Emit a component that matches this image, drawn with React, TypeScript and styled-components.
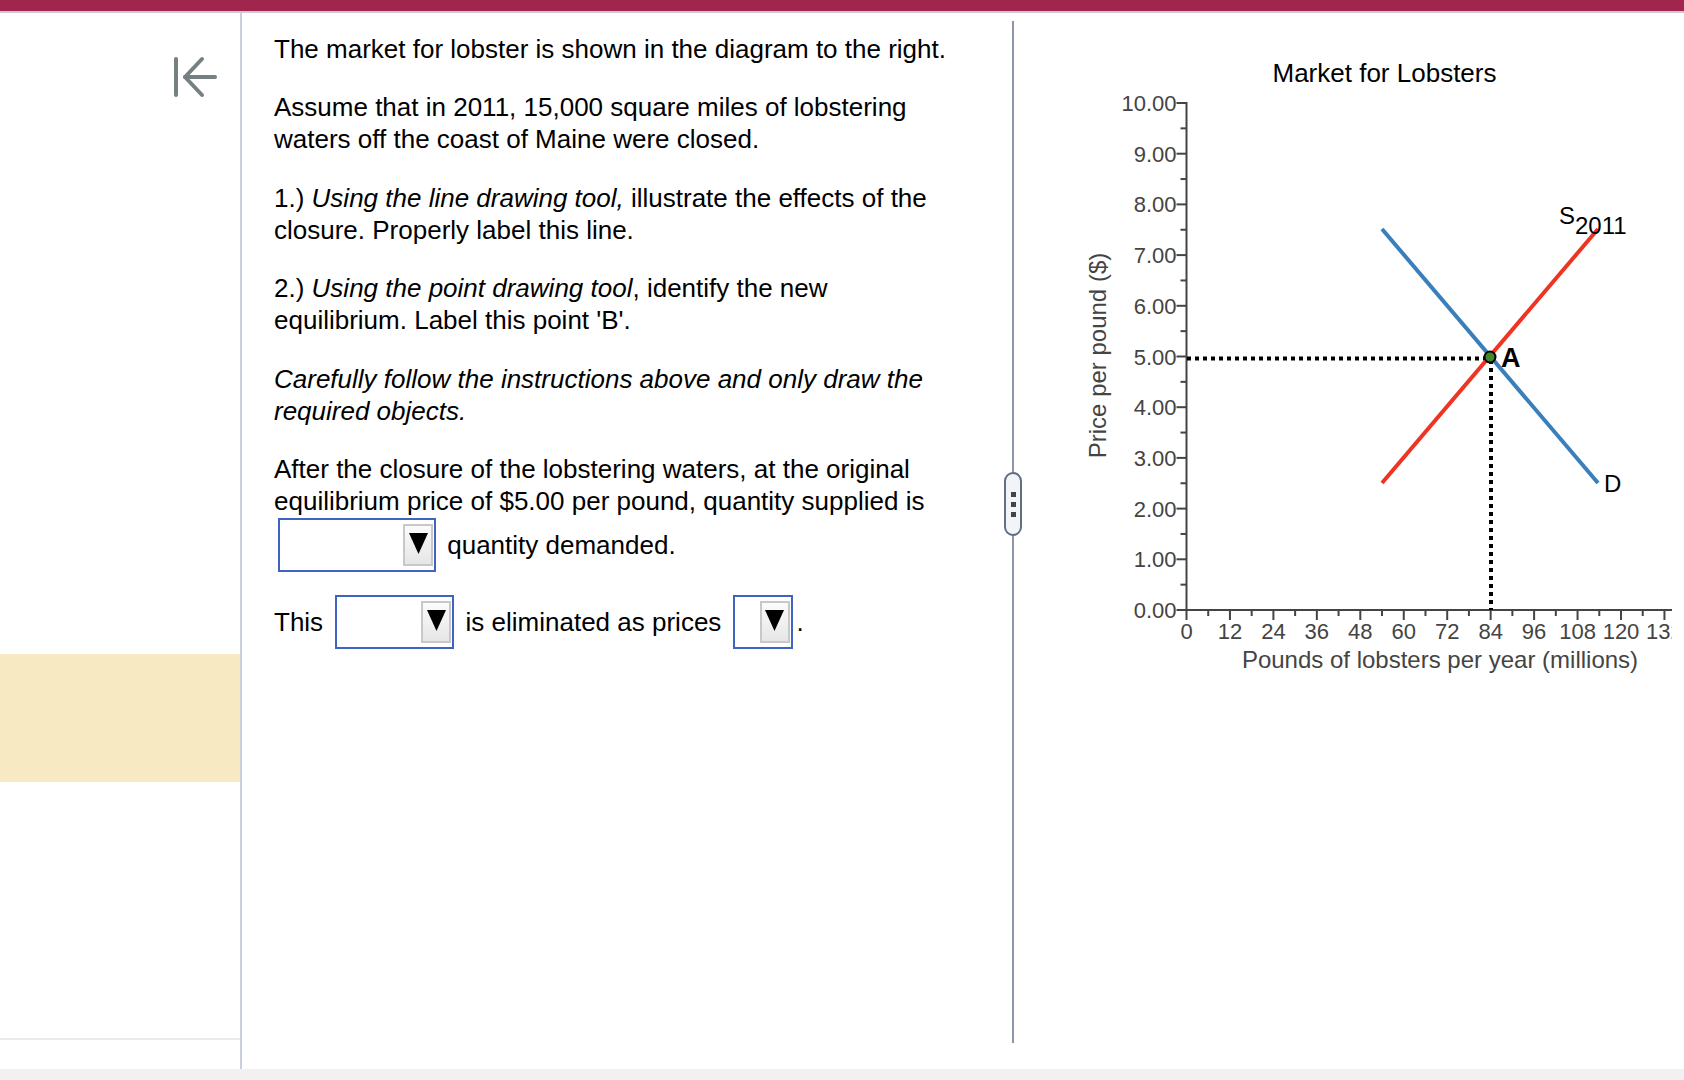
import React from "react";
import styled, { createGlobalStyle } from "styled-components";

const GlobalStyle = createGlobalStyle`
  html, body {
    margin: 0;
    padding: 0;
    background: #fff;
  }
`;

const yLabels = ["0.00", "1.00", "2.00", "3.00", "4.00", "5.00", "6.00", "7.00", "8.00", "9.00", "10.00"];
const xLabels = ["0", "12", "24", "36", "48", "60", "72", "84", "96", "108", "120", "132"];

const AXIS_X = 1186.5;
const AXIS_Y = 610;
const Y_STEP = 50.7;
const X_STEP = 43.45;

const MarketChart = () => {
  const yMinor = Array.from({ length: 10 }, (_, i) => AXIS_Y - (i + 0.5) * Y_STEP);
  const xMinor = Array.from({ length: 11 }, (_, i) => AXIS_X + (i + 0.5) * X_STEP);
  return (
    <ChartSvg viewBox="1014 13 658 660" width={658} height={660}>
      <ChartTitle x={1384.5} y={82} textAnchor="middle">
        Market for Lobsters
      </ChartTitle>

      {yLabels.map((label, i) => {
        const y = AXIS_Y - i * Y_STEP;
        return (
          <g key={label}>
            <line x1={AXIS_X - 10} x2={AXIS_X} y1={y} y2={y} stroke="#444" strokeWidth={2} />
            <AxisText x={AXIS_X - 10} y={y + 8} textAnchor="end">
              {label}
            </AxisText>
          </g>
        );
      })}
      {yMinor.map((y) => (
        <line key={y} x1={AXIS_X - 6} x2={AXIS_X} y1={y} y2={y} stroke="#444" strokeWidth={2} />
      ))}

      {xLabels.map((label, i) => {
        const x = AXIS_X + i * X_STEP;
        return (
          <g key={label}>
            <line x1={x} x2={x} y1={AXIS_Y} y2={AXIS_Y + 10} stroke="#444" strokeWidth={2} />
            <AxisText x={x} y={639} textAnchor="middle">
              {label}
            </AxisText>
          </g>
        );
      })}
      {xMinor.map((x) => (
        <line key={x} x1={x} x2={x} y1={AXIS_Y} y2={AXIS_Y + 6} stroke="#444" strokeWidth={2} />
      ))}

      <line x1={AXIS_X} x2={AXIS_X} y1={102} y2={AXIS_Y + 1} stroke="#444" strokeWidth={2} />
      <line x1={AXIS_X} x2={1672} y1={AXIS_Y} y2={AXIS_Y} stroke="#444" strokeWidth={2} />

      <AxisTitle x={1440} y={668} textAnchor="middle">
        Pounds of lobsters per year (millions)
      </AxisTitle>
      <AxisTitle transform="translate(1106 355.5) rotate(-90)" textAnchor="middle">
        Price per pound ($)
      </AxisTitle>

      <line x1={1187} x2={1487} y1={358.5} y2={358.5} stroke="#000" strokeWidth={4} strokeDasharray="4 4" />
      <line x1={1491} x2={1491} y1={360} y2={610} stroke="#000" strokeWidth={4} strokeDasharray="4 4" />

      <line x1={1382} y1={483} x2={1598} y2={229} stroke="#ee3524" strokeWidth={4} />
      <line x1={1382} y1={229} x2={1598} y2={483} stroke="#3a7fbb" strokeWidth={4} />
      <circle cx={1490} cy={357} r={5.5} fill="#3f8a2b" stroke="#000" strokeWidth={2} />

      <CurveLabel x={1559} y={224}>
        S
        <tspan dy={10}>2011</tspan>
      </CurveLabel>
      <CurveLabel x={1604} y={492}>
        D
      </CurveLabel>
      <PointLabel x={1501} y={367}>
        A
      </PointLabel>
    </ChartSvg>
  );
};

const Dropdown = ({ width, $inset }: { width: number; $inset?: boolean }) => (
  <Select $width={width} $inset={$inset}>
    <SelectButton>
      <svg width="19" height="21" viewBox="0 0 19 21">
        <path d="M0 0 H19 L9.5 21 Z" fill="#000" />
      </svg>
    </SelectButton>
  </Select>
);

export default function App() {
  return (
    <>
      <GlobalStyle />
      <Page>
        <TopBar />
        <Main>
          <Sidebar>
            <BackButton>
              <svg width="50" height="50" viewBox="0 0 50 50" fill="none" stroke="#767f82" strokeWidth="4" strokeLinecap="round" strokeLinejoin="round">
                <path d="M6 9 V45" />
                <path d="M15 27 H45" />
                <path d="M32 9 L15 27 L32 45" />
              </svg>
            </BackButton>
            <Highlight />
            <SidebarRule />
          </Sidebar>
          <Question>
            <Para>The market for lobster is shown in the diagram to the right.</Para>
            <Para>Assume that in 2011, 15,000 square miles of lobstering waters off the coast of Maine were closed.</Para>
            <Para>
              1.) <em>Using the line drawing tool,</em> illustrate the effects of the closure. Properly label this line.
            </Para>
            <Para>
              2.) <em>Using the point drawing tool</em>, identify the new equilibrium. Label this point 'B'.
            </Para>
            <Para>
              <em>Carefully follow the instructions above and only draw the required objects.</em>
            </Para>
            <Para $tight>
              After the closure of the lobstering waters, at the original equilibrium price of $5.00 per pound, quantity supplied is{" "}
              <Dropdown width={158} /> quantity demanded.
            </Para>
            <Para>
              This <Dropdown width={119} $inset /> is eliminated as prices <Dropdown width={60} />.
            </Para>
          </Question>
          <Divider>
            <Handle>
              <HandleDot />
              <HandleDot />
              <HandleDot />
            </Handle>
          </Divider>
          <ChartPane>
            <MarketChart />
          </ChartPane>
        </Main>
        <BottomBar />
      </Page>
    </>
  );
}

const Page = styled.div`
  width: 1684px;
  height: 1080px;
  display: flex;
  flex-direction: column;
  overflow: hidden;
  font-family: "Liberation Sans", Arial, sans-serif;
  color: #000;
`;

const TopBar = styled.div`
  height: 11px;
  flex: none;
  background: #a0264d;
  border-bottom: 2px solid #d3c6d6;
`;

const Main = styled.main`
  flex: 1;
  min-height: 0;
  display: flex;
`;

const BottomBar = styled.div`
  height: 11px;
  flex: none;
  background: #f1f1f1;
`;

const Sidebar = styled.aside`
  width: 240px;
  flex: none;
  display: flex;
  flex-direction: column;
  border-right: 2px solid #c9cfdd;
`;

const BackButton = styled.div`
  height: 50px;
  margin-top: 37px;
  padding-right: 20px;
  display: flex;
  justify-content: flex-end;
`;

const Highlight = styled.div`
  height: 128px;
  margin-top: 554px;
  background: #f7eac3;
`;

const SidebarRule = styled.div`
  height: 2px;
  margin-top: auto;
  margin-bottom: 29px;
  background: #ebebeb;
`;

const Question = styled.section`
  width: 770px;
  flex: none;
  box-sizing: border-box;
  padding: 20px 60px 0 32px;
  font-size: 26px;
  line-height: 32px;
`;

const Para = styled.p<{ $tight?: boolean }>`
  margin: 0 0 ${(p) => (p.$tight ? "16px" : "26.4px")};
`;

const Select = styled.span<{ $width: number; $inset?: boolean }>`
  display: inline-flex;
  justify-content: flex-end;
  box-sizing: border-box;
  width: ${(p) => p.$width}px;
  height: 54px;
  margin: 1px 4px 6px ${(p) => (p.$inset ? "5px" : "4px")};
  padding: 4px 1px 4px 0;
  vertical-align: middle;
  border: 2px solid #3e64c0;
  background: #fff;
`;

const SelectButton = styled.span`
  box-sizing: border-box;
  width: 30px;
  height: 42px;
  display: flex;
  justify-content: center;
  padding-top: 7px;
  border: 2px solid #c8c8c8;
  background: linear-gradient(#fbfbfb, #e6e6e6);
`;

const Divider = styled.div`
  position: relative;
  width: 2px;
  flex: none;
  margin: 8px 0 26px;
  background: #8d96a8;
`;

const Handle = styled.div`
  position: absolute;
  top: 451px;
  left: -8px;
  box-sizing: border-box;
  width: 18px;
  height: 64px;
  display: flex;
  flex-direction: column;
  align-items: center;
  justify-content: center;
  gap: 5px;
  border: 2px solid #5f6f85;
  border-radius: 9px;
  background: #f2f4f8;
`;

const HandleDot = styled.span`
  width: 5px;
  height: 5px;
  background: #444;
`;

const ChartPane = styled.div`
  flex: 1;
  min-width: 0;
`;

const ChartSvg = styled.svg`
  display: block;
  font-family: "Liberation Sans", Arial, sans-serif;
`;

const ChartTitle = styled.text`
  font-size: 26px;
  fill: #000;
`;

const AxisText = styled.text`
  font-size: 22px;
  fill: #444;
`;

const AxisTitle = styled.text`
  font-size: 24px;
  fill: #444;
`;

const CurveLabel = styled.text`
  font-size: 24px;
  fill: #000;
`;

const PointLabel = styled.text`
  font-size: 27px;
  font-weight: bold;
  fill: #000;
`;
